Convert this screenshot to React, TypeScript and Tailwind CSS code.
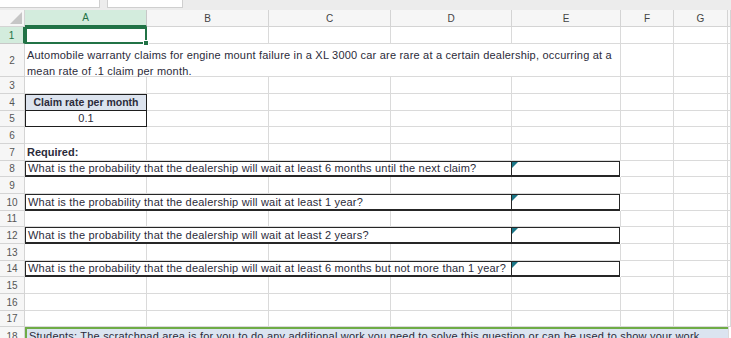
import React from "react";

const FONT = { fontFamily: '"Liberation Sans", Arial, sans-serif' };

// column widths (each includes its 1px right gridline)
const COLS = ["w-[122px]", "w-[122px]", "w-[122px]", "w-[121px]", "w-[109px]", "w-[53px]", "w-[54px]", "flex-1"];
const LETTERS = ["A", "B", "C", "D", "E", "F", "G", ""];

function RowHead({ n, active }: { n: number | string; active?: boolean }) {
  return (
    <div
      className={
        active
          ? "flex w-[25px] shrink-0 items-center justify-center border-r-2 border-b border-r-[#217346] border-b-[#c8c8c8] bg-[#d3ecdd] text-[10px] text-[#217346]"
          : "flex w-[25px] shrink-0 items-center justify-center border-r border-b border-[#d4d4d4] bg-[#f6f6f6] text-[10px] text-[#555]"
      }
    >
      {n}
    </div>
  );
}

function Blank({ w }: { w: string }) {
  return <div className={`${w} shrink-0 border-r border-b border-[#dadada]`} />;
}

function Blanks({ from }: { from: number }) {
  return (
    <>
      {COLS.slice(from).map((w, i) => (
        <Blank key={i} w={w} />
      ))}
    </>
  );
}

function Row({ n, h, children, active }: { n: number; h: string; children?: React.ReactNode; active?: boolean }) {
  return (
    <div className={`flex ${h}`}>
      <RowHead n={n} active={active} />
      {children ?? <Blanks from={0} />}
    </div>
  );
}

function Question({ n, h, text }: { n: number; h: string; text: string }) {
  return (
    <Row n={n} h={h}>
      <div className="flex w-[487px] shrink-0 items-center overflow-hidden whitespace-nowrap border-t border-b-2 border-l border-r border-[#262626] pl-[2px] text-[11px] tracking-[0.2px] text-[#2b2b3a]">
        {text}
      </div>
      <div className="relative w-[108px] shrink-0 border-t border-b-2 border-r border-[#262626]">
        <svg className="absolute left-0 top-0" width="6" height="6" viewBox="0 0 6 6">
          <polygon points="0,0 6,0 0,6" fill="#1b7687" />
        </svg>
      </div>
      <div className="w-px shrink-0" />
      <Blanks from={5} />
    </Row>
  );
}

export default function App() {
  return (
    <div className="h-[338px] w-[731px] overflow-hidden bg-white text-[#222]" style={FONT}>
      {/* top strip */}
      <div className="flex h-[10px] gap-[7px] bg-[#ececec]">
        <div className="h-[8px] w-[100px] border-r border-b border-[#cfcfcf] bg-white" />
        <div className="h-[8px] w-[76px] border-x border-b border-[#cfcfcf] bg-white" />
      </div>

      {/* column headers */}
      <div className="flex h-[17px]">
        <div className="relative w-[25px] shrink-0 border-r border-b border-[#d4d4d4] bg-[#f6f6f6]">
          <svg className="absolute right-[2px] bottom-[2px]" width="12" height="12" viewBox="0 0 12 12">
            <polygon points="12,0 12,12 0,12" fill="#c6c6c6" />
          </svg>
        </div>
        {COLS.map((w, i) =>
          i === 0 ? (
            <div
              key={i}
              className={`${w} flex shrink-0 items-center justify-center border-r border-b-2 border-r-[#c8c8c8] border-b-[#217346] bg-[#d3ecdd] text-[10px] text-[#217346]`}
            >
              {LETTERS[i]}
            </div>
          ) : (
            <div
              key={i}
              className={`${w} flex shrink-0 items-center justify-center border-r border-b border-[#d4d4d4] bg-[#f6f6f6] text-[10px] text-[#444]`}
            >
              {LETTERS[i]}
            </div>
          )
        )}
      </div>

      {/* row 1 - selected A1 */}
      <Row n={1} h="h-[17px]" active>
        <div className="relative w-[122px] shrink-0 border-2 border-[#217346]">
          <div className="absolute -right-[4px] -bottom-[4px] h-[6px] w-[6px] border border-white bg-[#217346]" />
        </div>
        <Blanks from={1} />
      </Row>

      {/* row 2 - merged A2:E2 with wrapped text */}
      <Row n={2} h="h-[33px]">
        <div className="w-[596px] shrink-0 border-r border-b border-[#dadada] pl-[2px] pt-[3px] text-[11px] leading-[16px] tracking-[0.2px] text-[#2b2b3a]">
          Automobile warranty claims for engine mount failure in a XL 3000 car are rare at a certain dealership, occurring at a
          mean rate of .1 claim per month.
        </div>
        <Blanks from={5} />
      </Row>

      <Row n={3} h="h-[17px]" />

      <Row n={4} h="h-[17px]">
        <div className="flex w-[122px] shrink-0 items-center justify-center border border-[#1e1e1e] bg-[#dce3ee] text-[10.5px] font-bold text-[#2b2b3a]">
          Claim rate per month
        </div>
        <Blanks from={1} />
      </Row>
      <Row n={5} h="h-[16px]">
        <div className="flex w-[122px] shrink-0 items-center justify-center border-x border-b border-[#1e1e1e] text-[11px] text-[#2b2b3a]">
          0.1
        </div>
        <Blanks from={1} />
      </Row>

      <Row n={6} h="h-[17px]" />

      <Row n={7} h="h-[17px]">
        <div className="flex w-[122px] shrink-0 items-end border-r border-b border-[#dadada] pl-[2px] text-[11px] font-bold text-[#2b2b3a]">
          Required:
        </div>
        <Blanks from={1} />
      </Row>

      <Question n={8} h="h-[16px]" text="What is the probability that the dealership will wait at least 6 months until the next claim?" />
      <Row n={9} h="h-[17px]" />
      <Question n={10} h="h-[17px]" text="What is the probability that the dealership will wait at least 1 year?" />
      <Row n={11} h="h-[16px]" />
      <Question n={12} h="h-[17px]" text="What is the probability that the dealership will wait at least 2 years?" />
      <Row n={13} h="h-[17px]" />
      <Question n={14} h="h-[16px]" text="What is the probability that the dealership will wait at least 6 months but not more than 1 year?" />
      <Row n={15} h="h-[17px]" />
      <Row n={16} h="h-[17px]" />
      <Row n={17} h="h-[16px]" />

      {/* row 18 - scratchpad */}
      <div className="flex h-[20px]">
        <RowHead n={18} />
        <div className="w-[703px] shrink-0 overflow-hidden whitespace-nowrap border-t-2 border-l-2 border-[#6fac46] bg-[#dbe4f0] pl-[2px] text-[11px] leading-[15px] tracking-[0.2px] text-[#2b2b3a]">
          Students: The scratchpad area is for you to do any additional work you need to solve this question or can be used to show your work
        </div>
        <div className="flex-1 border-l border-[#dadada]" />
      </div>
    </div>
  );
}
